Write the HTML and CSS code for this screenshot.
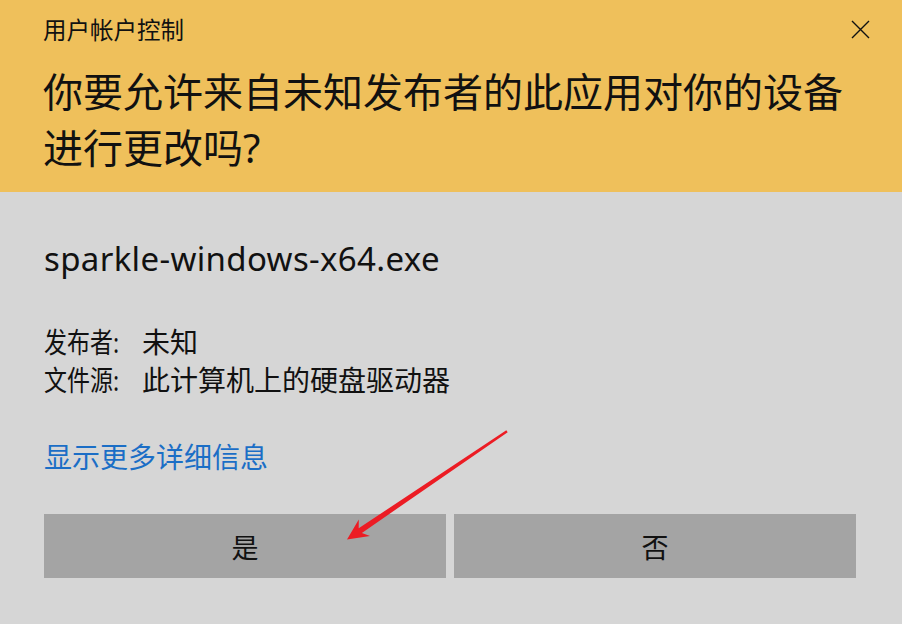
FILE: index.html
```html
<!DOCTYPE html>
<html lang="zh-CN">
<head>
    <meta charset="UTF-8">
    <meta name="viewport" content="width=device-width, initial-scale=1.0">
    <title>用户帐户控制</title>
    <link rel="stylesheet" href="styles.css">
</head>
<body>
    <div class="dialog">
        <header class="banner">
            <div class="banner-top">
                <span class="caption">用户帐户控制</span>
                <button class="close" aria-label="关闭">
                    <svg width="19" height="19" viewBox="0 0 19 19">
                        <path d="M1 1 L18 18 M18 1 L1 18" stroke="#111" stroke-width="1.4" fill="none"/>
                    </svg>
                </button>
            </div>
            <h1 class="question">你要允许来自未知发布者的此应用对你的设备进行更改吗?</h1>
        </header>

        <main class="details">
            <div class="file-name">sparkle-windows-x64.exe</div>

            <div class="meta">
                <div><span class="label">发布者:</span>未知</div>
                <div><span class="label">文件源:</span>此计算机上的硬盘驱动器</div>
            </div>

            <a class="more-link" href="#">显示更多详细信息</a>

            <div class="actions">
                <button class="action">是</button>
                <button class="action">否</button>
            </div>
        </main>

        <!-- red pointer drawn over the dialog -->
        <svg class="annotation" viewBox="0 0 902 624" width="902" height="624">
            <polygon fill="#ec1c24"
                points="347,539.5 358.8,519.5 358.7,528.3 506.3,430.2 507.7,432.2 361.9,532.9 370,536.1"/>
        </svg>
    </div>
</body>
</html>
```

FILE: styles.css
```css
body {
    margin: 0;
    font-family: "Noto Sans", "Noto Sans CJK SC", sans-serif;
    color: #111;
    background-color: #d6d6d6;
}

.dialog {
    position: relative;
    width: 902px;
    height: 624px;
    overflow: hidden;
    background-color: #d6d6d6;
}

.banner {
    box-sizing: border-box;
    height: 192px;
    padding: 15px 32px 0 43px;
    background-color: #efc05b;
}

.banner-top {
    display: flex;
    justify-content: space-between;
    align-items: center;
    height: 30px;
}

.caption {
    font-size: 23.5px;
    line-height: 30px;
}

.close {
    display: flex;
    padding: 0;
    border: none;
    background: none;
    margin-top: -1px;
}

.question {
    width: 810px;
    margin: 19px 0 0;
    font-size: 40px;
    font-weight: normal;
    line-height: 56px;
}

.details {
    padding: 0 46px 0 44px;
}

.file-name {
    margin-top: 47px;
    font-size: 33px;
    letter-spacing: 0.35px;
    line-height: 40px;
}

.meta {
    margin-top: 44px;
    font-size: 28px;
    line-height: 38px;
}

.meta .label {
    display: inline-block;
    width: 98px;
    transform: scaleX(0.82);
    transform-origin: left center;
    white-space: nowrap;
}

.more-link {
    display: block;
    margin-top: 38px;
    font-size: 28px;
    line-height: 40px;
    color: #1b6ec6;
    text-decoration: none;
}

.actions {
    display: grid;
    grid-template-columns: 1fr 1fr;
    gap: 8px;
    margin-top: 37px;
}

.action {
    height: 64px;
    border: none;
    background-color: #a4a4a4;
    font-family: "Noto Sans", "Noto Sans CJK SC", sans-serif;
    font-size: 27px;
    color: #111;
}

.annotation {
    position: absolute;
    top: 0;
    left: 0;
    pointer-events: none;
}
```
